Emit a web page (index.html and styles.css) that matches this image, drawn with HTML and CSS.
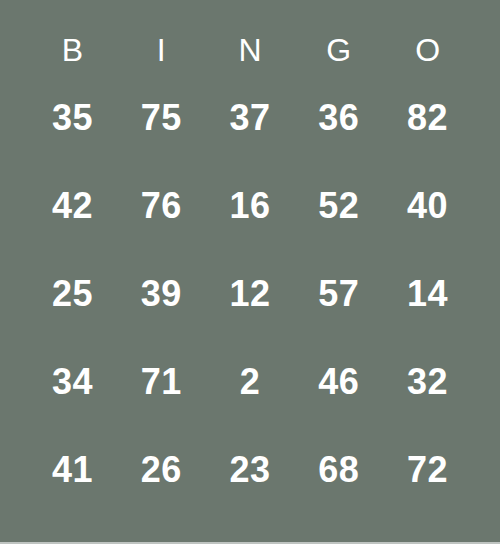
FILE: index.html
```html
<!DOCTYPE html>
<html>
<head>
<meta charset="utf-8">
<link rel="stylesheet" href="styles.css">
</head>
<body>
<div class="card">
  <div class="grid">
    <div class="head">B</div><div class="head">I</div><div class="head">N</div><div class="head">G</div><div class="head">O</div>
    <div class="num">35</div><div class="num">75</div><div class="num">37</div><div class="num">36</div><div class="num">82</div>
    <div class="num">42</div><div class="num">76</div><div class="num">16</div><div class="num">52</div><div class="num">40</div>
    <div class="num">25</div><div class="num">39</div><div class="num">12</div><div class="num">57</div><div class="num">14</div>
    <div class="num">34</div><div class="num">71</div><div class="num">2</div><div class="num">46</div><div class="num">32</div>
    <div class="num">41</div><div class="num">26</div><div class="num">23</div><div class="num">68</div><div class="num">72</div>
  </div>
</div>
</body>
</html>
```
FILE: styles.css
```css
html, body {
  margin: 0;
  padding: 0;
  background: #bfc4c1;
}
.card {
  width: 500px;
  height: 542px;
  background: #6b776e;
  box-sizing: border-box;
  padding: 26px 28px 0 28px;
}
.grid {
  display: grid;
  grid-template-columns: repeat(5, 1fr);
  grid-template-rows: 48px repeat(5, 88px);
  color: #fff;
  font-family: "Liberation Sans", Arial, sans-serif;
}
.head {
  display: flex;
  align-items: center;
  justify-content: center;
  font-size: 32px;
  font-weight: normal;
}
.num {
  display: flex;
  align-items: center;
  justify-content: center;
  font-size: 36px;
  font-weight: bold;
  letter-spacing: 0.5px;
}
```
